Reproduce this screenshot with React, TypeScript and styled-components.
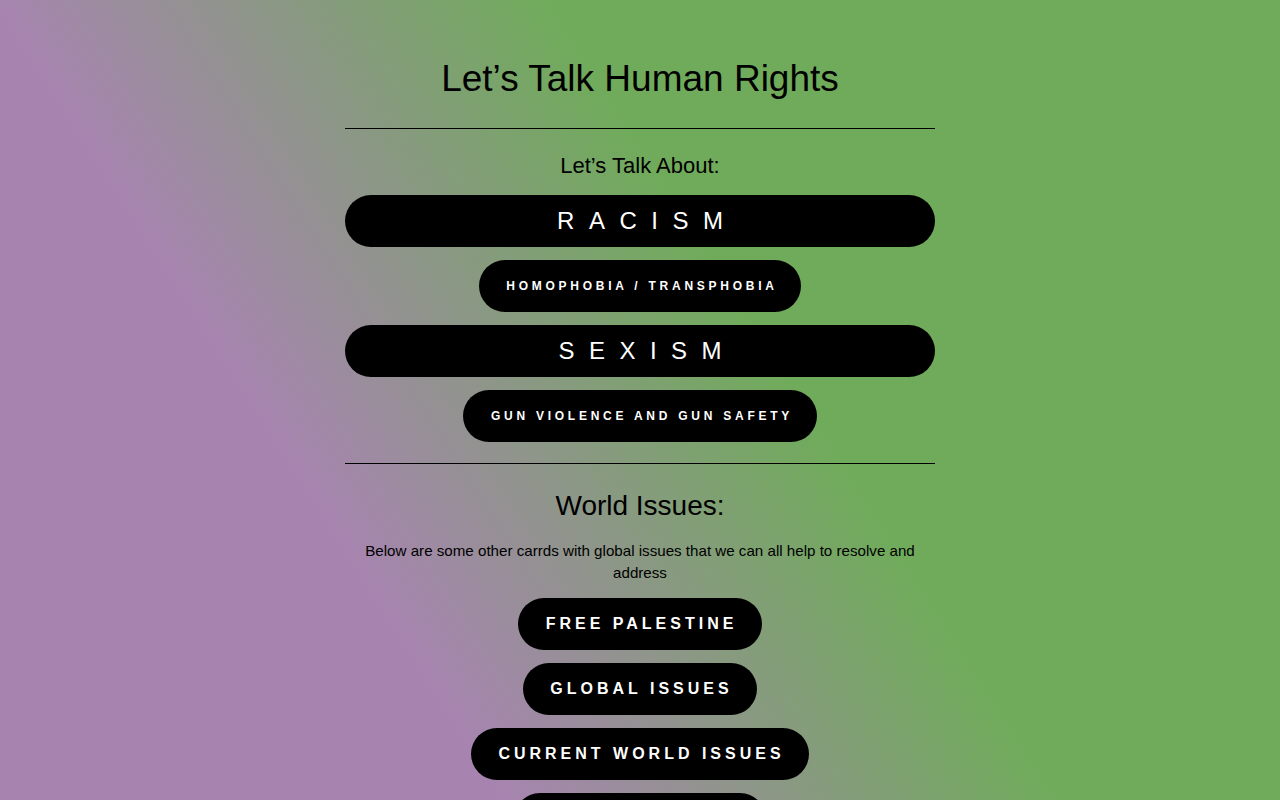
import React from "react";
import styled, { createGlobalStyle, css } from "styled-components";

const GlobalStyle = createGlobalStyle`
  html {
    background-color: #70ab5b;
    background-image: linear-gradient(57.5deg, #a784b0 28%, #70ab5b 59%);
    background-repeat: no-repeat;
    background-size: 100% 800px;
  }
  html, body {
    margin: 0;
    padding: 0;
  }
  body {
    font-family: "Liberation Sans", Arial, Helvetica, sans-serif;
    color: #000;
  }
`;

const Page = styled.main`
  display: flex;
  justify-content: center;
  padding: 56px 0 40px;
`;

const Column = styled.div`
  width: 590px;
  display: flex;
  flex-direction: column;
  align-items: center;
`;

const Title = styled.h1`
  margin: 0;
  font-size: 37px;
  line-height: 45px;
  font-weight: 400;
  text-align: center;
`;

const Divider = styled.hr<{ $top: number }>`
  align-self: stretch;
  margin: ${(p) => p.$top}px 0 0;
  border: 0;
  height: 1px;
  background: #000;
`;

const Section = styled.section`
  align-self: stretch;
  margin-top: 21px;
  display: flex;
  flex-direction: column;
  align-items: center;
  gap: 13px;
`;

const Subheading = styled.h2<{ $size: number; $lh: number }>`
  margin: 0;
  font-size: ${(p) => p.$size}px;
  line-height: ${(p) => p.$lh}px;
  font-weight: 400;
  text-align: center;
`;

const Paragraph = styled.p`
  margin: 0 0 1px;
  font-size: 15.15px;
  line-height: 22px;
  text-align: center;
`;

type Variant = "wide" | "small" | "medium";

const Pill = styled.a<{ $variant: Variant }>`
  box-sizing: border-box;
  display: inline-flex;
  align-items: center;
  justify-content: center;
  height: 52px;
  border-radius: 26px;
  background: #000;
  color: #fff;
  text-decoration: none;
  white-space: nowrap;
  cursor: pointer;
  ${(p) =>
    p.$variant === "wide"
      ? css`
          align-self: stretch;
          font-size: 24px;
          font-weight: 400;
          letter-spacing: 14.5px;
          padding-left: 14.5px;
        `
      : p.$variant === "small"
      ? css`
          font-size: 12px;
          font-weight: 700;
          letter-spacing: 3.75px;
          padding: 0 23.5px 0 27.5px;
        `
      : css`
          font-size: 16px;
          font-weight: 700;
          letter-spacing: 4px;
          padding: 0 24.5px 0 27.5px;
        `}
`;

const topics: { label: string; variant: Variant }[] = [
  { label: "RACISM", variant: "wide" },
  { label: "HOMOPHOBIA / TRANSPHOBIA", variant: "small" },
  { label: "SEXISM", variant: "wide" },
  { label: "GUN VIOLENCE AND GUN SAFETY", variant: "small" },
];

const world = ["FREE PALESTINE", "GLOBAL ISSUES", "CURRENT WORLD ISSUES", "CLIMATE CHANGE"];

export default function App() {
  return (
    <>
      <GlobalStyle />
      <Page>
        <Column>
          <Title>Let’s Talk Human Rights</Title>
          <Divider $top={27} />
          <Section>
            <Subheading $size={22} $lh={32}>Let’s Talk About:</Subheading>
            {topics.map((t) => (
              <Pill key={t.label} $variant={t.variant}>
                {t.label}
              </Pill>
            ))}
          </Section>
          <Divider $top={21} />
          <Section>
            <Subheading $size={28} $lh={42}>World Issues:</Subheading>
            <Paragraph>
              Below are some other carrds with global issues that we can all help to resolve and address
            </Paragraph>
            {world.map((w) => (
              <Pill key={w} $variant="medium">
                {w}
              </Pill>
            ))}
          </Section>
        </Column>
      </Page>
    </>
  );
}
